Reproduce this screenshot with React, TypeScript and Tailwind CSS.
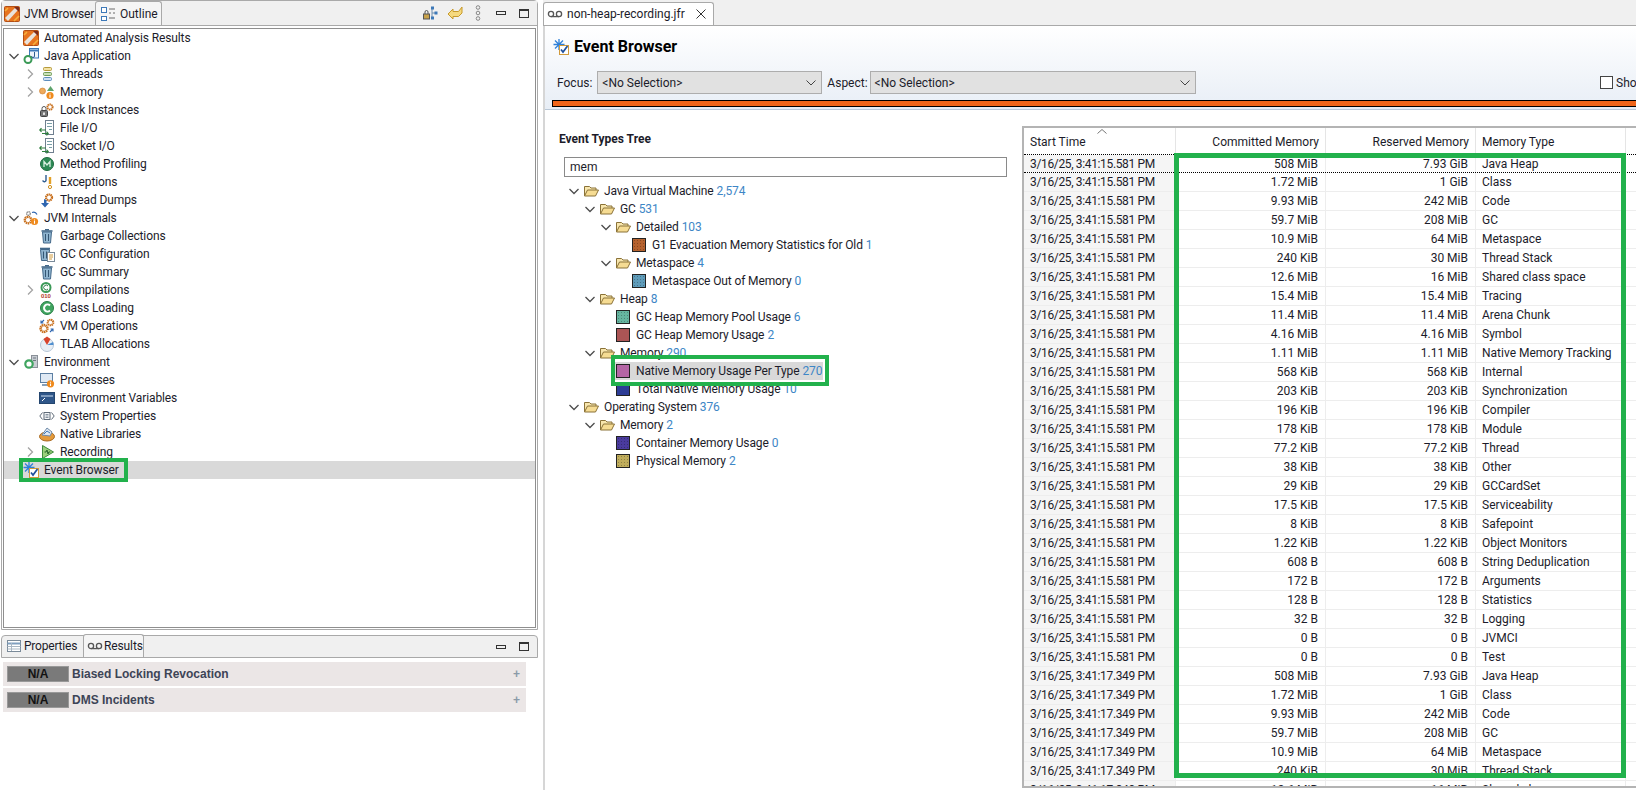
import React from "react";

type IconProps = { name: string };

function Gear({ x, y, r, c = "#c8701e" }: { x: number; y: number; r: number; c?: string }) {
  return <circle cx={x} cy={y} r={r} fill="#fff" stroke={c} strokeWidth={r * 0.75} strokeDasharray="1.4 .5" />;
}

function Info({ x, y }: { x: number; y: number }) {
  return (
    <g>
      <circle cx={x} cy={y} r="3.6" fill="#ef8a1d" />
      <path d={`M${x} ${y - 2}v.9M${x} ${y - 0.4}v2.6`} stroke="#fff" strokeWidth="1.1" />
    </g>
  );
}

function Icon({ name }: IconProps) {
  const body: Record<string, React.ReactNode> = {
    jmc: (
      <g>
        <rect x="0.5" y="0.5" width="15" height="15" rx="1" fill="#e8741f" stroke="#b34f14" />
        <path d="M1 12 11 2l3 2L4 15z" fill="#e9e2dc" />
        <path d="M10 1h5v5z" fill="#7d2c1c" />
        <path d="M1 5l3-3M10 15l5-5" stroke="#f7b03c" strokeWidth="1.6" />
      </g>
    ),
    outline: (
      <g fill="#fff" stroke="#3d79b8">
        <rect x="1.5" y="1.5" width="5" height="5" />
        <rect x="1.5" y="10.5" width="5" height="4" />
        <path d="M9 3h6M9 7h2M13 7h2M9 12h6" stroke="#6b6b6b" />
      </g>
    ),
    javaApp: (
      <g>
        <rect x="6.5" y="0.5" width="9" height="9.5" fill="#eef4fb" stroke="#3d79b8" />
        <path d="M6.5 2.5h9" stroke="#3d79b8" strokeWidth="2" />
        <path d="M11.5 4v4a1.5 1.5 0 0 1-3 0" fill="none" stroke="#2d5c91" />
        <circle cx="5" cy="11.5" r="3.5" fill="#fff" stroke="#3b9a57" strokeWidth="2" />
      </g>
    ),
    threads: (
      <g strokeWidth="1">
        <rect x="4.5" y="1.5" width="8" height="3" rx="1" fill="#f3e2a4" stroke="#b69a3c" />
        <rect x="4.5" y="6.5" width="8" height="3" rx="1" fill="#c9e0b8" stroke="#6f9b58" />
        <rect x="4.5" y="11.5" width="8" height="3" rx="1" fill="#cfe0f2" stroke="#5d8dbd" />
      </g>
    ),
    memory: (
      <g>
        <circle cx="3.5" cy="7" r="3" fill="#eeaa5c" stroke="#c97b2b" strokeWidth=".6" />
        <path d="M8 7l3.5-5L15 7z" fill="#5ea36b" />
        <Info x={11} y={11.5} />
      </g>
    ),
    lock: (
      <g>
        <Gear x={11} y={5} r={2.6} />
        <rect x="1.5" y="8.5" width="7" height="6" rx="1" fill="#777" stroke="#444" />
        <path d="M3 8.5V6.5a2 2 0 0 1 4 0v2" fill="none" stroke="#555" />
        <rect x="4.2" y="10.5" width="1.6" height="2.4" fill="#fff" />
      </g>
    ),
    io: (
      <g>
        <rect x="6.5" y="0.5" width="8" height="14" fill="#fff" stroke="#6f7f8f" />
        <path d="M8 3.5h5M8 6.5h5M10 9.5h3" stroke="#7aa0a8" />
        <path d="M1 10h6M2.5 8.2 .8 10l1.7 1.8M3 13.5h6M7.5 11.7 9.2 13.5 7.5 15.3" fill="none" stroke="#2f7f3f" strokeWidth="1.2" />
      </g>
    ),
    method: (
      <g>
        <circle cx="8" cy="8" r="6.5" fill="#2d8a55" stroke="#1f6b40" />
        <path d="M5 11V5.5L8 9l3-3.5V11" fill="none" stroke="#d9efe0" strokeWidth="1.3" />
      </g>
    ),
    exceptions: (
      <g>
        <path d="M7 1v5a1.6 1.6 0 0 1-3.2.4" fill="none" stroke="#2d5c91" strokeWidth="1.4" />
        <path d="M11 3v7" stroke="#e3a127" strokeWidth="2.4" />
        <circle cx="11" cy="13" r="1.6" fill="#fff" stroke="#d0901c" />
      </g>
    ),
    dumps: (
      <g>
        <Gear x={10} y={5.5} r={3} />
        <path d="M5 7v4H2l4 4.5L10 11H7.5V8z" fill="#2f66b0" />
      </g>
    ),
    internals: (
      <g>
        <Gear x={5} y={10} r={3.2} />
        <Gear x={5.5} y={3.5} r={1.8} c="#888" />
        <path d="M9 2.5a4 4 0 0 1 5 2" fill="none" stroke="#2f66b0" strokeWidth="1.2" />
        <Info x={11.5} y={11.5} />
      </g>
    ),
    trash: (
      <g>
        <path d="M3.5 4h9l-1 11h-7z" fill="#8fb4cf" stroke="#44698a" />
        <path d="M2.5 3h11" stroke="#44698a" strokeWidth="1.6" />
        <path d="M6.5 6v7M9.5 6v7" stroke="#345673" />
        <rect x="6" y="1" width="4" height="1.5" fill="#44698a" />
      </g>
    ),
    trashDoc: (
      <g>
        <path d="M1.5 3.5h9l-1 11h-7z" fill="#8fb4cf" stroke="#44698a" />
        <path d="M1 2.5h10" stroke="#44698a" strokeWidth="1.6" />
        <path d="M4.5 5.5v7M7.5 5.5v7" stroke="#345673" />
        <rect x="8.5" y="6.5" width="7" height="9" fill="#fff" stroke="#7a8a99" />
        <path d="M10 9h4M10 11h4M10 13h3" stroke="#d09a3c" />
      </g>
    ),
    compile: (
      <g>
        <circle cx="7" cy="5.5" r="4.5" fill="#fff" stroke="#3b9a57" strokeWidth="2" />
        <path d="M9 4a2.4 2.4 0 1 0 0 3" fill="none" stroke="#2d7a45" />
        <text x="2" y="15.5" fontSize="6" fontWeight="700" fill="#b23a2a" fontFamily="Liberation Sans, sans-serif">010</text>
      </g>
    ),
    classLoad: (
      <g>
        <circle cx="8" cy="8" r="6.5" fill="#3fa45f" stroke="#2a8148" />
        <path d="M11 5.5a3.5 3.5 0 1 0 0 5" fill="none" stroke="#fff" strokeWidth="2" />
      </g>
    ),
    vmops: (
      <g>
        <Gear x={5} y={10.5} r={3.4} />
        <Gear x={11.5} y={4.5} r={2.8} />
        <path d="M2 5l3-3M2 2.6V5h2.4M11 14l3-3M14 13.4V11h-2.400" fill="none" stroke="#2f66b0" strokeWidth="1.1" />
      </g>
    ),
    tlab: (
      <g>
        <circle cx="8" cy="9" r="6.500" fill="#e8eef5" stroke="#b6c6d6" />
        <path d="M8 9 4.500 3 8 .5 11.500 3z" fill="#d8432c" />
        <path d="M8 9l6-3a6.500 6.500 0 0 1 .5 3z" fill="#4f8fd0" />
      </g>
    ),
    env: (
      <g>
        <rect x="8.500" y="1.500" width="6" height="12" fill="#c7ccd2" stroke="#8a9098" />
        <path d="M10 4h3M10 6.500h3" stroke="#6f7780" />
        <circle cx="6" cy="10" r="3.700" fill="#fff" stroke="#3fa45f" strokeWidth="2.200" />
      </g>
    ),
    processes: (
      <g>
        <rect x="1.500" y="1.500" width="12" height="9" fill="#dfe9f4" stroke="#5c7fa3" />
        <path d="M3 13h6" stroke="#5c7fa3" strokeWidth="1.500" />
        <Info x={11.500} y={11.800} />
      </g>
    ),
    envVars: (
      <g>
        <rect x="0.500" y="2.500" width="15" height="11" fill="#2f5689" stroke="#24466f" />
        <path d="M2 6h12" stroke="#cfe0f2" />
        <path d="M3 11l3-3" stroke="#fff" />
      </g>
    ),
    sysProps: (
      <g fill="none" stroke="#5f6b78">
        <path d="M3.500 4.500 .8 8l2.700 3.500M12.500 4.500 15.200 8l-2.700 3.500" />
        <rect x="5" y="4.500" width="6" height="7" fill="#f4f6f8" />
        <path d="M6.500 6.500h3M6.500 8h3M6.500 9.500h3" stroke="#8a96a3" />
      </g>
    ),
    native: (
      <g>
        <ellipse cx="8" cy="10.500" rx="7.500" ry="4.500" fill="#e39a3c" stroke="#a8691f" />
        <path d="M3 9l5-7 5 4-2 4z" fill="#dfe8f2" stroke="#6f8aa8" />
        <path d="M5 8l3-3 3 2" fill="none" stroke="#3d79b8" />
      </g>
    ),
    recording: (
      <g>
        <path d="M3.500 1.500 14.500 8 3.500 14.500z" fill="#9bd07c" stroke="#3e8a3c" />
        <path d="M5.500 8h1.500l1-2 1 4 .8-2h1.500" fill="none" stroke="#24602a" />
      </g>
    ),
    event: (
      <g>
        <path d="M6 0v11M.5 5.500h11M2 1.500l8 8M10 1.500l-8 8" stroke="#2f80d8" strokeWidth="1.300" />
        <rect x="6.500" y="6.500" width="9" height="9" fill="#fff" stroke="#d09a3c" />
        <path d="M8 10.500l2 2.500 4.500-6" fill="none" stroke="#1f4f9c" strokeWidth="1.700" />
      </g>
    ),
    folder: (
      <g>
        <path d="M1.500 13V3.500h5l1.500 1.500h5V7" fill="#f8e6ad" stroke="#8a7238" />
        <path d="M1.500 13 4.500 7h11l-3 6z" fill="#f6dc93" stroke="#8a7238" />
      </g>
    ),
    tape: (
      <g fill="none" stroke="#555" strokeWidth="1.300">
        <circle cx="4" cy="8" r="2.600" />
        <circle cx="12" cy="8" r="2.600" />
        <path d="M4 10.600h8" />
      </g>
    ),
    table: (
      <g>
        <rect x="1.500" y="2.500" width="13" height="11" fill="#fff" stroke="#7a8a99" />
        <path d="M1.500 5.500h13" stroke="#7f9fbf" strokeWidth="2" />
        <path d="M1.500 8.500h13M1.500 11h13M5.500 5v8" stroke="#a9b7c4" />
      </g>
    ),
  };
  return (
    <svg viewBox="0 0 16 16" className="w-4 h-4 shrink-0">
      {body[name]}
    </svg>
  );
}

function Chevron({ open }: { open?: boolean }) {
  return (
    <svg viewBox="0 0 14 14" className="w-[14px] h-[14px] shrink-0">
      {open ? (
        <path d="M2.500 5 7 9.500 11.500 5" fill="none" stroke="#4d4d4d" strokeWidth="1.300" />
      ) : (
        <path d="M5 2.500 9.500 7 5 11.500" fill="none" stroke="#a3a3a3" strokeWidth="1.300" />
      )}
    </svg>
  );
}

function Swatch({ color }: { color: string }) {
  return (
    <span className="w-4 h-4 shrink-0 flex items-center justify-center">
      <span className={`w-[14px] h-[14px] border border-[#222] ${color}`} />
    </span>
  );
}

const indents = ["pl-[3px]", "pl-[19px]", "pl-[35px]", "pl-[51px]"];

type RowProps = {
  depth: number;
  label: string;
  count?: string;
  icon?: string;
  swatch?: string;
  open?: boolean;
  closed?: boolean;
  selected?: boolean;
  marked?: boolean;
};

function TreeRow({ depth, label, count, icon, swatch, open, closed, selected, marked }: RowProps) {
  return (
    <div className={`h-[18px] flex items-center whitespace-nowrap tracking-[-0.12px] ${indents[depth]} ${selected ? "bg-[#d9d9d9]" : ""}`}>
      <span className="w-[14px] shrink-0">{(open || closed) && <Chevron open={open} />}</span>
      <span className={`ml-[2px] h-[18px] flex items-center ${marked ? "bg-[#d9d9d9] pr-[1px]" : ""}`}>
        {swatch ? <Swatch color={swatch} /> : <Icon name={icon ?? "folder"} />}
        <span className="ml-[5px] text-[#1c1c2a]">{label}</span>
        {count && <span className="ml-[3px] text-[#3d86c6]">{count}</span>}
      </span>
    </div>
  );
}

const outline: RowProps[] = [
  { depth: 0, label: "Automated Analysis Results", icon: "jmc" },
  { depth: 0, label: "Java Application", icon: "javaApp", open: true },
  { depth: 1, label: "Threads", icon: "threads", closed: true },
  { depth: 1, label: "Memory", icon: "memory", closed: true },
  { depth: 1, label: "Lock Instances", icon: "lock" },
  { depth: 1, label: "File I/O", icon: "io" },
  { depth: 1, label: "Socket I/O", icon: "io" },
  { depth: 1, label: "Method Profiling", icon: "method" },
  { depth: 1, label: "Exceptions", icon: "exceptions" },
  { depth: 1, label: "Thread Dumps", icon: "dumps" },
  { depth: 0, label: "JVM Internals", icon: "internals", open: true },
  { depth: 1, label: "Garbage Collections", icon: "trash" },
  { depth: 1, label: "GC Configuration", icon: "trashDoc" },
  { depth: 1, label: "GC Summary", icon: "trash" },
  { depth: 1, label: "Compilations", icon: "compile", closed: true },
  { depth: 1, label: "Class Loading", icon: "classLoad" },
  { depth: 1, label: "VM Operations", icon: "vmops" },
  { depth: 1, label: "TLAB Allocations", icon: "tlab" },
  { depth: 0, label: "Environment", icon: "env", open: true },
  { depth: 1, label: "Processes", icon: "processes" },
  { depth: 1, label: "Environment Variables", icon: "envVars" },
  { depth: 1, label: "System Properties", icon: "sysProps" },
  { depth: 1, label: "Native Libraries", icon: "native" },
  { depth: 1, label: "Recording", icon: "recording", closed: true },
  { depth: 0, label: "Event Browser", icon: "event", selected: true },
];

const dots = "bg-[radial-gradient(#00000040_35%,transparent_40%)] bg-[length:3px_3px]";

const eventTree: RowProps[] = [
  { depth: 0, label: "Java Virtual Machine", count: "2,574", open: true },
  { depth: 1, label: "GC", count: "531", open: true },
  { depth: 2, label: "Detailed", count: "103", open: true },
  { depth: 3, label: "G1 Evacuation Memory Statistics for Old", count: "1", swatch: `bg-[#b5622f] ${dots}` },
  { depth: 2, label: "Metaspace", count: "4", open: true },
  { depth: 3, label: "Metaspace Out of Memory", count: "0", swatch: `bg-[#5f9cba] ${dots}` },
  { depth: 1, label: "Heap", count: "8", open: true },
  { depth: 2, label: "GC Heap Memory Pool Usage", count: "6", swatch: `bg-[#66b5a0] ${dots}` },
  { depth: 2, label: "GC Heap Memory Usage", count: "2", swatch: "bg-[#ab5555]" },
  { depth: 1, label: "Memory", count: "290", open: true },
  { depth: 2, label: "Native Memory Usage Per Type", count: "270", swatch: "bg-[#b565a5]", marked: true },
  { depth: 2, label: "Total Native Memory Usage", count: "10", swatch: "bg-[#2d3d96]" },
  { depth: 0, label: "Operating System", count: "376", open: true },
  { depth: 1, label: "Memory", count: "2", open: true },
  { depth: 2, label: "Container Memory Usage", count: "0", swatch: `bg-[#4a3b9e] ${dots}` },
  { depth: 2, label: "Physical Memory", count: "2", swatch: `bg-[#c0ad5c] ${dots}` },
];

const first: [string, string, string][] = [
  ["508 MiB", "7.93 GiB", "Java Heap"],
  ["1.72 MiB", "1 GiB", "Class"],
  ["9.93 MiB", "242 MiB", "Code"],
  ["59.7 MiB", "208 MiB", "GC"],
  ["10.9 MiB", "64 MiB", "Metaspace"],
  ["240 KiB", "30 MiB", "Thread Stack"],
  ["12.6 MiB", "16 MiB", "Shared class space"],
  ["15.4 MiB", "15.4 MiB", "Tracing"],
  ["11.4 MiB", "11.4 MiB", "Arena Chunk"],
  ["4.16 MiB", "4.16 MiB", "Symbol"],
  ["1.11 MiB", "1.11 MiB", "Native Memory Tracking"],
  ["568 KiB", "568 KiB", "Internal"],
  ["203 KiB", "203 KiB", "Synchronization"],
  ["196 KiB", "196 KiB", "Compiler"],
  ["178 KiB", "178 KiB", "Module"],
  ["77.2 KiB", "77.2 KiB", "Thread"],
  ["38 KiB", "38 KiB", "Other"],
  ["29 KiB", "29 KiB", "GCCardSet"],
  ["17.5 KiB", "17.5 KiB", "Serviceability"],
  ["8 KiB", "8 KiB", "Safepoint"],
  ["1.22 KiB", "1.22 KiB", "Object Monitors"],
  ["608 B", "608 B", "String Deduplication"],
  ["172 B", "172 B", "Arguments"],
  ["128 B", "128 B", "Statistics"],
  ["32 B", "32 B", "Logging"],
  ["0 B", "0 B", "JVMCI"],
  ["0 B", "0 B", "Test"],
];

const rows = [
  ...first.map((r) => ["3/16/25, 3:41:15.581 PM", ...r]),
  ...first.slice(0, 7).map((r) => ["3/16/25, 3:41:17.349 PM", ...r]),
];

const cols = "grid grid-cols-[152px_150px_150px_150px_1fr]";

function MinMax() {
  return (
    <div className="flex items-center gap-[13px] pr-[8px]">
      <span className="w-[10px] h-[4px] border border-[#333]" />
      <span className="w-[10px] h-[9px] border border-[#333] border-t-2" />
    </div>
  );
}

function Combo({ width }: { width: string }) {
  return (
    <div className={`${width} h-[23px] bg-[#e1e1e1] border border-[#adadad] flex items-center justify-between pl-[4px] pr-[5px]`}>
      <span>&lt;No Selection&gt;</span>
      <svg viewBox="0 0 10 6" className="w-[10px] h-[6px]">
        <path d="M.5.5 5 5 9.500.5" fill="none" stroke="#444" />
      </svg>
    </div>
  );
}

function Result({ label }: { label: string }) {
  return (
    <div className="h-[24px] bg-[#ebe6e6] flex items-center pl-[4px] pr-[4px] font-['Liberation_Sans',sans-serif] font-bold">
      <span className="w-[62px] h-[16px] bg-[#7a7a7a] border border-[#999] flex items-center justify-center text-[#111]">N/A</span>
      <span className="ml-[3px] text-[#3d4456] flex-1">{label}</span>
      <span className="text-[#8a9aa8] pr-[2px]">+</span>
    </div>
  );
}

export default function App() {
  return (
    <div className="w-[1636px] h-[790px] overflow-hidden flex bg-white font-['Roboto',sans-serif] text-[12px] text-[#1c1c2a] leading-[16px]">
      <div className="w-[538px] shrink-0 flex flex-col pl-[1px]">
        <div className="h-[630px] flex flex-col border border-[#a9a9a9] rounded-t-[4px]">
          <div className="h-[25px] bg-[#f0f0f0] flex items-end border-b border-[#a9a9a9] relative">
            <div className="h-[22px] w-[93px] pl-[2px] flex items-center gap-[2px] whitespace-nowrap tracking-[-0.12px]">
              <Icon name="jmc" />
              <span className="ml-[2px]">JVM Browser</span>
            </div>
            <div className="h-[24px] w-[67px] pl-[4px] flex items-center gap-[4px] bg-[#f5f5f5] border border-b-0 border-[#a9a9a9] rounded-t-[3px]">
              <Icon name="outline" />
              <span>Outline</span>
            </div>
            <div className="flex-1 flex items-center justify-end h-full">
              <svg viewBox="0 0 16 16" className="w-4 h-4">
                <rect x="1.500" y="9" width="6" height="5" fill="#c9a24a" stroke="#555" />
                <path d="M3 9V7a1.500 1.500 0 0 1 3 0v2" fill="none" stroke="#555" />
                <path d="M10 3v10M10 8h3" fill="none" stroke="#6f8fb0" />
                <rect x="9" y="1.500" width="3" height="3" fill="#3d79b8" />
                <rect x="12.500" y="6.500" width="3" height="3" fill="#3d79b8" />
                <rect x="9" y="11.500" width="3" height="3" fill="#3d79b8" />
              </svg>
              <svg viewBox="0 0 16 16" className="w-4 h-4 ml-[9px]">
                <path d="M1 9l5-5v2.500h5.500L15 2v6l-3.500 3.500H6V14z" fill="#f5d97f" stroke="#c79a2c" />
              </svg>
              <svg viewBox="0 0 8 16" className="w-2 h-4 ml-[11px]">
                <g fill="none" stroke="#888">
                  <circle cx="4" cy="2.500" r="1.800" />
                  <circle cx="4" cy="8" r="1.800" />
                  <circle cx="4" cy="13.500" r="1.800" />
                </g>
              </svg>
              <span className="ml-[14px]">
                <MinMax />
              </span>
            </div>
          </div>
          <div className="flex-1 mx-[1px] mt-[2px] mb-[1px] border border-[#8f8f8f] bg-white relative">
            {outline.map((r) => (
              <TreeRow key={r.label} {...r} />
            ))}
            <div className="absolute left-[15px] top-[429px] w-[109px] h-[24px] border-[4px] border-[#22b14c]" />
          </div>
        </div>
        <div className="mt-[5px] flex-1 flex flex-col">
          <div className="h-[23px] bg-[#f0f0f0] border border-[#a9a9a9] rounded-t-[4px] flex items-end">
            <div className="h-[22px] w-[81px] pl-[4px] flex items-center gap-[2px] tracking-[-0.2px]">
              <Icon name="table" />
              <span>Properties</span>
            </div>
            <div className="h-[23px] w-[61px] pl-[3px] flex items-center gap-[1px] bg-[#f5f5f5] border-x border-t border-[#a9a9a9] rounded-t-[3px] tracking-[-0.12px]">
              <Icon name="tape" />
              <span>Results</span>
            </div>
            <div className="flex-1 h-full flex items-center justify-end">
              <MinMax />
            </div>
          </div>
          <div className="pt-[4px] pl-[2px] pr-[12px] flex flex-col gap-[2px]">
            <Result label="Biased Locking Revocation" />
            <Result label="DMS Incidents" />
          </div>
        </div>
      </div>

      <div className="ml-[5px] flex-1 min-w-0 flex flex-col">
        <div className="h-[26px] flex items-end bg-[#f0f0f0] border-b border-[#a9a9a9] pt-[3px]">
          <div className="h-[23px] w-[171px] bg-white border border-b-0 border-[#a9a9a9] rounded-t-[3px] flex items-center pl-[3px]">
            <Icon name="tape" />
            <span className="ml-[4px]">non-heap-recording.jfr</span>
            <svg viewBox="0 0 10 10" className="w-[10px] h-[10px] ml-[11px]">
              <path d="M.5.5l9 9M9.500.5l-9 9" stroke="#333" />
            </svg>
          </div>
        </div>
        <div className="flex-1 min-h-0 flex flex-col border-l-2 border-[#d6d6d6]">
          <div className="h-[84px] bg-gradient-to-b from-white to-[#e8eef6] border-b border-[#b9c8d8] flex flex-col pl-[8px]">
            <div className="h-[38px] pt-[3px] flex items-center">
              <Icon name="event" />
              <span className="ml-[5px] text-[16px] font-bold text-black">Event Browser</span>
            </div>
            <div className="mt-[7px] h-[23px] flex items-center relative">
              <span className="ml-[4px] mr-[5px]">Focus:</span>
              <Combo width="w-[225px]" />
              <span className="ml-[5px] mr-[2px]">Aspect:</span>
              <Combo width="w-[326px]" />
              <span className="absolute left-[1047px] flex items-center gap-[3px] w-[40px] overflow-hidden">
                <span className="w-[13px] h-[13px] shrink-0 bg-white border border-[#444]" />
                <span>Show</span>
              </span>
            </div>
            <div className="mt-[6px] -ml-[1px] h-[7px] bg-[#f0651a] border border-black border-r-0" />
          </div>
          <div className="flex-1 min-h-0 flex">
            <div className="w-[477px] shrink-0 pl-[14px] pt-[21px]">
              <div className="font-bold">Event Types Tree</div>
              <div className="mt-[10px] ml-[5px] w-[443px] h-[20px] border border-[#8a8a8a] flex items-center pl-[5px]">mem</div>
              <div className="mt-[5px] relative">
                <div className="w-[300px] pl-[5px]">
                  {eventTree.map((r, i) => (
                    <TreeRow key={i} {...r} />
                  ))}
                </div>
                <div className="absolute left-[52px] top-[173px] w-[218px] h-[31px] border-[4px] border-[#22b14c]" />
              </div>
            </div>
            <div className="flex-1 min-w-0 mt-[16px] mb-[2px] border-2 border-[#b4b4b4] border-r-0 border-b-2 overflow-hidden relative">
              <div className={`${cols} h-[26px]`}>
                {["Start Time", "Committed Memory", "Reserved Memory", "Memory Type"].map((h, i) => (
                  <div
                    key={h}
                    className={`flex items-center border-r border-[#e5e5e5] px-[6px] pt-[2px] relative ${i === 1 || i === 2 ? "justify-end" : ""}`}
                  >
                    {h}
                    {i === 0 && (
                      <svg viewBox="0 0 10 5" className="absolute left-[73px] top-[1px] w-[10px] h-[5px]">
                        <path d="M.5 4.500 5 .5l4.500 4" fill="none" stroke="#777" />
                      </svg>
                    )}
                  </div>
                ))}
                <div />
              </div>
              {rows.map((r, i) => (
                <div
                  key={i}
                  className={`${cols} h-[19px] border-b ${i === 0 ? "border-dotted border-black border-t" : "border-[#ededed]"}`}
                >
                  <div className="bg-[#f5f5f5] pl-[6px] flex items-center border-r border-[#ededed] tracking-[-0.35px]">{r[0]}</div>
                  <div className="flex items-center justify-end pr-[7px] border-r border-[#ededed]">{r[1]}</div>
                  <div className="flex items-center justify-end pr-[7px] border-r border-[#ededed]">{r[2]}</div>
                  <div className="flex items-center pl-[6px] border-r border-[#ededed]">{r[3]}</div>
                  <div />
                </div>
              ))}
              <div className="absolute left-[150px] top-[25px] w-[452px] h-[625px] border-[5px] border-[#22b14c]" />
            </div>
          </div>
        </div>
      </div>
    </div>
  );
}
